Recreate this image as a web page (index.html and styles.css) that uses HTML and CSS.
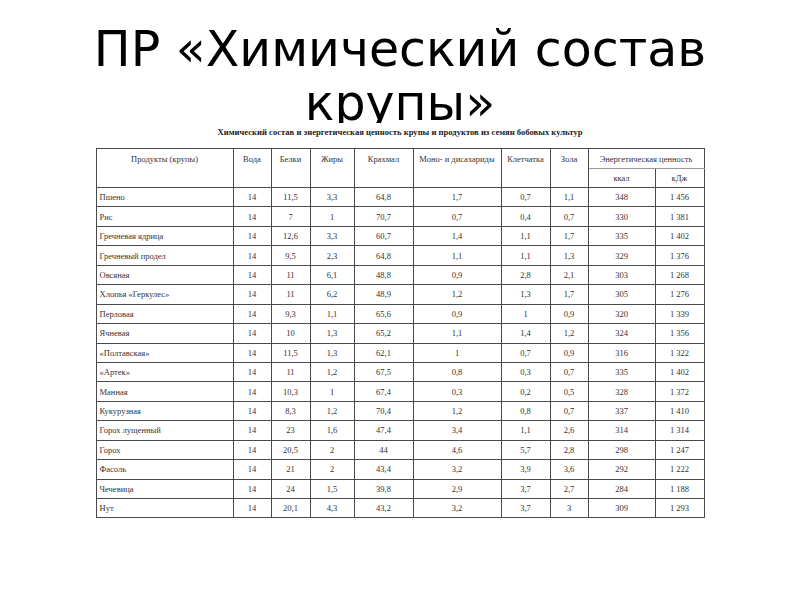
FILE: index.html
```html
<!DOCTYPE html>
<html lang="ru">
<head>
<meta charset="utf-8">
<link rel="stylesheet" href="styles.css">
</head>
<body>
<div class="slide">
  <div class="title-box">
    <h1 class="title">ПР «Химический состав крупы»</h1>
  </div>
  <div class="figure">
    <div class="caption">Химический состав и энергетическая ценность крупы и продуктов из семян бобовых культур</div>
    <table class="data">
      <colgroup>
        <col class="c-name"><col class="c-w"><col class="c-b"><col class="c-f"><col class="c-s"><col class="c-m"><col class="c-k"><col class="c-z"><col class="c-kk"><col class="c-kj">
      </colgroup>
      <thead>
        <tr class="h1">
          <th rowspan="2">Продукты (крупы)</th>
          <th rowspan="2">Вода</th>
          <th rowspan="2">Белки</th>
          <th rowspan="2">Жиры</th>
          <th rowspan="2">Крахмал</th>
          <th rowspan="2">Моно- и дисахариды</th>
          <th rowspan="2">Клетчатка</th>
          <th rowspan="2">Зола</th>
          <th colspan="2" class="energy">Энергетическая ценность</th>
        </tr>
        <tr class="h2">
          <th class="sub">ккал</th>
          <th class="sub">кДж</th>
        </tr>
      </thead>
      <tbody>
        <tr><td>Пшено</td><td>14</td><td>11,5</td><td>3,3</td><td>64,8</td><td>1,7</td><td>0,7</td><td>1,1</td><td>348</td><td>1 456</td></tr>
        <tr><td>Рис</td><td>14</td><td>7</td><td>1</td><td>70,7</td><td>0,7</td><td>0,4</td><td>0,7</td><td>330</td><td>1 381</td></tr>
        <tr><td>Гречневая ядрица</td><td>14</td><td>12,6</td><td>3,3</td><td>60,7</td><td>1,4</td><td>1,1</td><td>1,7</td><td>335</td><td>1 402</td></tr>
        <tr><td>Гречневый продел</td><td>14</td><td>9,5</td><td>2,3</td><td>64,8</td><td>1,1</td><td>1,1</td><td>1,3</td><td>329</td><td>1 376</td></tr>
        <tr><td>Овсяная</td><td>14</td><td>11</td><td>6,1</td><td>48,8</td><td>0,9</td><td>2,8</td><td>2,1</td><td>303</td><td>1 268</td></tr>
        <tr><td>Хлопья «Геркулес»</td><td>14</td><td>11</td><td>6,2</td><td>48,9</td><td>1,2</td><td>1,3</td><td>1,7</td><td>305</td><td>1 276</td></tr>
        <tr><td>Перловая</td><td>14</td><td>9,3</td><td>1,1</td><td>65,6</td><td>0,9</td><td>1</td><td>0,9</td><td>320</td><td>1 339</td></tr>
        <tr><td>Ячневая</td><td>14</td><td>10</td><td>1,3</td><td>65,2</td><td>1,1</td><td>1,4</td><td>1,2</td><td>324</td><td>1 356</td></tr>
        <tr><td>«Полтавская»</td><td>14</td><td>11,5</td><td>1,3</td><td>62,1</td><td>1</td><td>0,7</td><td>0,9</td><td>316</td><td>1 322</td></tr>
        <tr><td>«Артек»</td><td>14</td><td>11</td><td>1,2</td><td>67,5</td><td>0,8</td><td>0,3</td><td>0,7</td><td>335</td><td>1 402</td></tr>
        <tr><td>Манная</td><td>14</td><td>10,3</td><td>1</td><td>67,4</td><td>0,3</td><td>0,2</td><td>0,5</td><td>328</td><td>1 372</td></tr>
        <tr><td>Кукурузная</td><td>14</td><td>8,3</td><td>1,2</td><td>70,4</td><td>1,2</td><td>0,8</td><td>0,7</td><td>337</td><td>1 410</td></tr>
        <tr><td>Горох лущенный</td><td>14</td><td>23</td><td>1,6</td><td>47,4</td><td>3,4</td><td>1,1</td><td>2,6</td><td>314</td><td>1 314</td></tr>
        <tr><td>Горох</td><td>14</td><td>20,5</td><td>2</td><td>44</td><td>4,6</td><td>5,7</td><td>2,8</td><td>298</td><td>1 247</td></tr>
        <tr><td>Фасоль</td><td>14</td><td>21</td><td>2</td><td>43,4</td><td>3,2</td><td>3,9</td><td>3,6</td><td>292</td><td>1 222</td></tr>
        <tr><td>Чечевица</td><td>14</td><td>24</td><td>1,5</td><td>39,8</td><td>2,9</td><td>3,7</td><td>2,7</td><td>284</td><td>1 188</td></tr>
        <tr><td>Нут</td><td>14</td><td>20,1</td><td>4,3</td><td>43,2</td><td>3,2</td><td>3,7</td><td>3</td><td>309</td><td>1 293</td></tr>
      </tbody>
    </table>
  </div>
</div>
</body>
</html>
```
FILE: styles.css
```css
html, body {
  margin: 0;
  padding: 0;
  background: #ffffff;
}
.slide {
  width: 800px;
  height: 600px;
  display: flex;
  flex-direction: column;
  align-items: center;
  overflow: hidden;
}
.title-box {
  width: 800px;
  height: 123px;
  overflow: hidden;
  padding-top: 23px;
  box-sizing: border-box;
}
.title {
  margin: 0;
  font-family: "DejaVu Sans", sans-serif;
  font-weight: normal;
  font-size: 49px;
  line-height: 54px;
  color: #000;
  text-align: center;
  padding: 0 80px;
}
.figure {
  width: 608px;
  display: flex;
  flex-direction: column;
  align-items: center;
  background: #fff;
}
.caption {
  font-family: "Liberation Serif", serif;
  font-weight: bold;
  font-size: 8.6px;
  line-height: 10px;
  color: #222;
  margin-top: 4px;
  height: 21px;
}
.data {
  border-collapse: collapse;
  table-layout: fixed;
  width: 608px;
  font-family: "Liberation Serif", serif;
  font-size: 8.5px;
  color: #333;
}
.c-name { width: 137px; }
.c-w { width: 38px; }
.c-b { width: 39px; }
.c-f { width: 44px; }
.c-s { width: 59px; }
.c-m { width: 88px; }
.c-k { width: 49px; }
.c-z { width: 38px; }
.c-kk { width: 67px; }
.c-kj { width: 49px; }
.data th, .data td {
  border: 1px solid #4a4a4a;
  padding: 0;
  white-space: nowrap;
  overflow: hidden;
}
.data th {
  font-weight: normal;
  vertical-align: top;
  padding-top: 5px;
}
.data .h1 th { height: 14px; }
.data .h2 th { height: 18px; }
.data th.sub {
  vertical-align: middle;
  padding-top: 0;
}
.data th.energy {
  border-bottom-color: #9a9a9a;
}
.data td {
  height: 18.44px;
  text-align: center;
}
.data td:first-child {
  text-align: left;
  padding-left: 3px;
}
```
